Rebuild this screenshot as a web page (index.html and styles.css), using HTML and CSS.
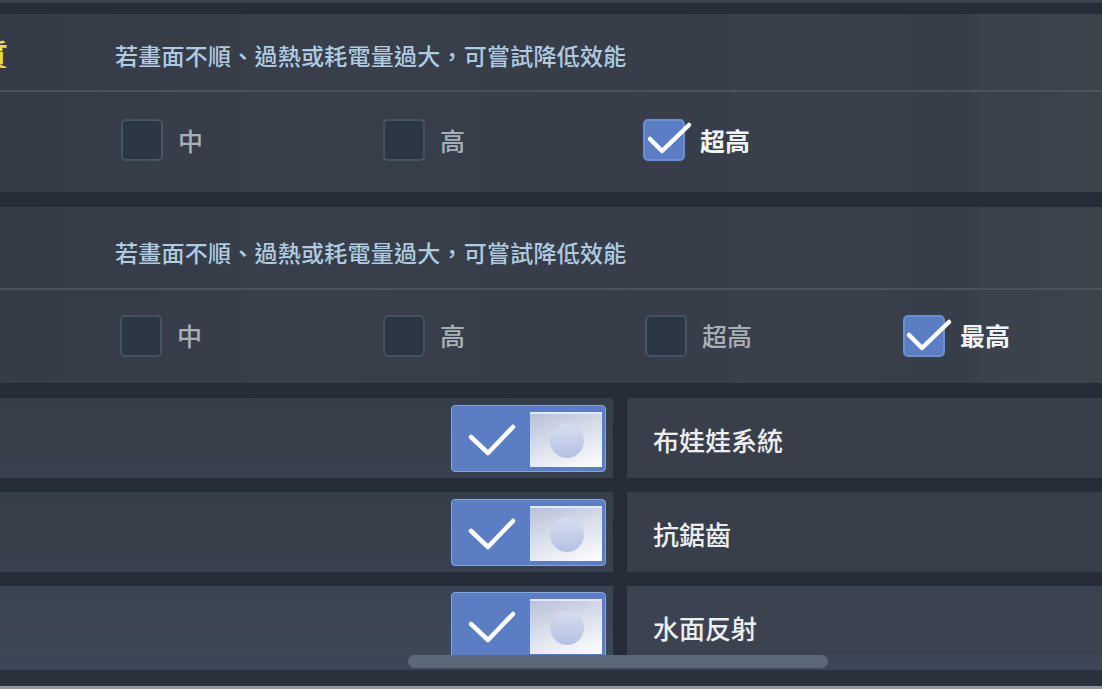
FILE: index.html
```html
<!DOCTYPE html>
<html lang="zh-Hant">
<head>
<meta charset="utf-8">
<title>畫面設定</title>
<link rel="stylesheet" href="styles.css">
</head>
<body>
<div class="screen">
  <div class="scroll">
    <div class="stub"></div>

    <section class="panel panel-a">
      <div class="head head-a">
        <div class="cut"><span class="title">畫質</span></div>
        <p class="desc">若畫面不順、過熱或耗電量過大，可嘗試降低效能</p>
      </div>
      <div class="line"></div>
      <div class="opts opts-a">
        <label class="opt"><span class="box"></span><span class="lbl">中</span></label>
        <label class="opt"><span class="box"></span><span class="lbl">高</span></label>
        <label class="opt on"><span class="box"><svg class="tick" viewBox="0 0 42 42" width="42" height="42"><path d="M7 20 L19 32 L46 6" /></svg></span><span class="lbl">超高</span></label>
      </div>
    </section>

    <section class="panel panel-b">
      <div class="head head-b">
        <p class="desc">若畫面不順、過熱或耗電量過大，可嘗試降低效能</p>
      </div>
      <div class="line"></div>
      <div class="opts opts-b">
        <label class="opt"><span class="box"></span><span class="lbl">中</span></label>
        <label class="opt"><span class="box"></span><span class="lbl">高</span></label>
        <label class="opt"><span class="box"></span><span class="lbl">超高</span></label>
        <label class="opt on"><span class="box"><svg class="tick" viewBox="0 0 42 42" width="42" height="42"><path d="M6 20 L19 33 L46 7" /></svg></span><span class="lbl">最高</span></label>
      </div>
    </section>

    <div class="row">
      <div class="left">
        <div class="toggle">
          <div class="tog-check"><svg viewBox="0 0 79 66" width="79" height="66"><path d="M19 32 L36 48 L61 22" /></svg></div>
          <div class="knob"><span class="dot"></span></div>
        </div>
      </div>
      <div class="right"><span class="name">布娃娃系統</span></div>
    </div>

    <div class="row">
      <div class="left">
        <div class="toggle">
          <div class="tog-check"><svg viewBox="0 0 79 66" width="79" height="66"><path d="M19 32 L36 48 L61 22" /></svg></div>
          <div class="knob"><span class="dot"></span></div>
        </div>
      </div>
      <div class="right"><span class="name">抗鋸齒</span></div>
    </div>

    <div class="row row-last">
      <div class="left">
        <div class="toggle">
          <div class="tog-check"><svg viewBox="0 0 79 66" width="79" height="66"><path d="M19 32 L36 48 L61 22" /></svg></div>
          <div class="knob"><span class="dot"></span></div>
        </div>
      </div>
      <div class="right"><span class="name">水面反射</span></div>
    </div>
  </div>

  <div class="footer">
    <div class="scrollbar"></div>
  </div>
  <div class="bottom-dark"></div>
  <div class="bottom-line"></div>
</div>
</body>
</html>
```

FILE: styles.css
```css
* { box-sizing: border-box; }

html, body {
  margin: 0;
  padding: 0;
  background: #262d38;
  font-family: "Noto Sans CJK TC", "Noto Sans", sans-serif;
}

.screen {
  width: 1102px;
  height: 689px;
  overflow: hidden;
  display: flex;
  flex-direction: column;
}

.scroll {
  height: 655px;
  overflow: hidden;
  flex: none;
  display: flex;
  flex-direction: column;
}

.stub {
  height: 3px;
  flex: none;
  background: #3b424c;
  margin-bottom: 11px;
}

.panel {
  flex: none;
  background: linear-gradient(90deg, #353c47 0%, #373e49 22%, #383f4a 22.3%, #373e49 66%, #39404b 66.4%, #373e49 88%, #3b424c 89%, #3c434d 100%);
  display: flex;
  flex-direction: column;
}

.panel-a { height: 178px; margin-bottom: 15px; }
.panel-b { height: 176px; margin-bottom: 15px; }

.head {
  display: flex;
  align-items: center;
  flex: none;
}
.head-a { height: 76px; padding-top: 6px; }
.head-b { height: 81px; padding-left: 115px; padding-top: 10px; }

.cut {
  width: 8px;
  overflow: hidden;
  display: flex;
  justify-content: flex-end;
  flex: none;
  margin-top: -4px;
}

.title {
  white-space: nowrap;
  font-size: 30px;
  line-height: 1;
  font-weight: 700;
  color: #ecd746;
}

.desc {
  margin: 0 0 0 107px;
  font-size: 23px;
  letter-spacing: 0.25px;
  line-height: 1;
  font-weight: 500;
  color: #aecbe2;
  white-space: nowrap;
}
.head-b .desc { margin-left: 0; }

.line {
  height: 2px;
  flex: none;
  background: #4a525d;
}

.opts {
  flex: 1;
  display: grid;
  grid-template-columns: 262px 260px 260px 262px;
  align-items: center;
  padding-left: 121px;
}
.opts-a { padding-bottom: 4px; }
.opts-b { padding-left: 120px; padding-bottom: 2px; grid-template-columns: 263px 262px 258px 262px; }

.opt {
  display: flex;
  align-items: center;
  gap: 15px;
}

.box {
  position: relative;
  width: 42px;
  height: 42px;
  border-radius: 5px;
  background: #2b3745;
  border: 2px solid #465363;
  flex: none;
}

.opt.on .box {
  background: #5a7dc3;
  border-color: #6d8fd0;
}

.tick {
  position: absolute;
  left: -2px;
  top: -2px;
  overflow: visible;
}
.tick path {
  fill: none;
  stroke: #ffffff;
  stroke-width: 4.5;
  stroke-linecap: round;
  stroke-linejoin: round;
}

.lbl {
  font-size: 25px;
  line-height: 1;
  color: #a9afb7;
  font-weight: 500;
}
.opt.on .lbl {
  color: #f1f3f5;
  font-weight: 700;
}

.row {
  flex: none;
  height: 80px;
  margin-bottom: 14px;
  display: flex;
  gap: 14px;
}
.row-last { height: 100px; margin-bottom: 0; }

.left {
  width: 613px;
  flex: none;
  background: linear-gradient(180deg, #363e49 0%, #38414d 100%);
  display: flex;
  justify-content: flex-end;
  align-items: flex-start;
  padding: 7px 7px 0 0;
}
.row-last .left { padding-top: 6px; background: linear-gradient(180deg, #3a4452 0%, #3e4959 100%); }

.right {
  flex: 1;
  background: #383f4a;
  display: flex;
  align-items: center;
  padding-left: 26px;
  padding-top: 3px;
}
.row-last .right { align-items: flex-start; padding-top: 29px; background: #3b4350; }

.name {
  font-size: 26px;
  line-height: 1;
  color: #eceef0;
  font-weight: 500;
  white-space: nowrap;
}

.toggle {
  width: 155px;
  height: 67px;
  border: 1px solid #86a5df;
  border-radius: 4px;
  background: #5a7dc4;
  display: flex;
  flex: none;
}

.tog-check {
  width: 78px;
  flex: none;
  height: 100%;
}
.tog-check svg { display: block; margin-top: -1px; }
.tog-check path {
  fill: none;
  stroke: #ffffff;
  stroke-width: 4.5;
  stroke-linecap: round;
  stroke-linejoin: round;
}

.knob {
  flex: 1;
  margin: 6px 3px 4px 0;
  background: linear-gradient(160deg, #b9c0d8 0%, #d9deeb 45%, #ffffff 100%);
  border-top: 2px solid #e6e9f2;
  display: flex;
  align-items: center;
  justify-content: center;
}

.dot {
  width: 34px;
  height: 34px;
  border-radius: 50%;
  background: linear-gradient(180deg, #d6ddf0 0%, #b4c1e3 100%);
  margin-left: 2px;
}

.footer {
  height: 15px;
  flex: none;
  background: #3c4654;
  padding-left: 408px;
}

.scrollbar {
  width: 420px;
  height: 13px;
  border-radius: 7px;
  background: #5d6877;
}

.bottom-dark {
  height: 16px;
  flex: none;
  background: #2a323d;
}

.bottom-line {
  height: 3px;
  flex: none;
  background: #8f979f;
}
```
